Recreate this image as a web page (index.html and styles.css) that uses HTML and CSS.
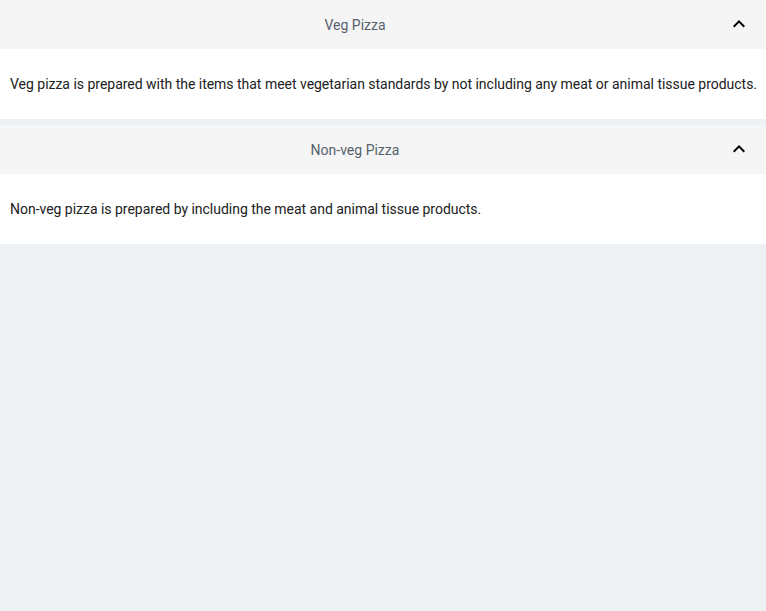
FILE: index.html
```
<!DOCTYPE html>
<html>
<head>
<meta charset="utf-8">
<link rel="stylesheet" href="styles.css">
</head>
<body>
<div class="accordion">
  <div class="item">
    <div class="header">
      <div class="title">Veg Pizza</div>
      <div class="icon"><svg width="24" height="24" viewBox="0 0 24 24"><path d="M12 8l-6 6 1.41 1.41L12 10.83l4.59 4.58L18 14z" fill="#000"/></svg></div>
    </div>
    <div class="content">Veg pizza is prepared with the items that meet vegetarian standards by not including any meat or animal tissue products.</div>
  </div>
  <div class="item">
    <div class="header">
      <div class="title">Non-veg Pizza</div>
      <div class="icon"><svg width="24" height="24" viewBox="0 0 24 24"><path d="M12 8l-6 6 1.41 1.41L12 10.83l4.59 4.58L18 14z" fill="#000"/></svg></div>
    </div>
    <div class="content">Non-veg pizza is prepared by including the meat and animal tissue products.</div>
  </div>
</div>
</body>
</html>
```
FILE: styles.css
```
html, body {
  margin: 0;
  padding: 0;
  background: #edf1f4;
  font-family: Roboto, "Liberation Sans", sans-serif;
  height: 100%;
}
.accordion {
  display: flex;
  flex-direction: column;
  gap: 6px;
}
.header {
  display: flex;
  align-items: center;
  height: 49px;
  background: #f5f5f5;
}
.title {
  flex: 1;
  text-align: center;
  font-size: 14px;
  color: #56616c;
}
.icon {
  width: 56px;
  box-sizing: border-box;
  padding-left: 2px;
  display: flex;
  justify-content: center;
  align-items: center;
  margin-top: -1px;
}
.icon svg { display: block; }
.content {
  background: #fff;
  height: 70px;
  box-sizing: border-box;
  padding: 0 0 0 10px;
  display: flex;
  align-items: center;
  font-size: 14px;
  letter-spacing: -0.02px;
  white-space: nowrap;
  color: #212121;
}
```
